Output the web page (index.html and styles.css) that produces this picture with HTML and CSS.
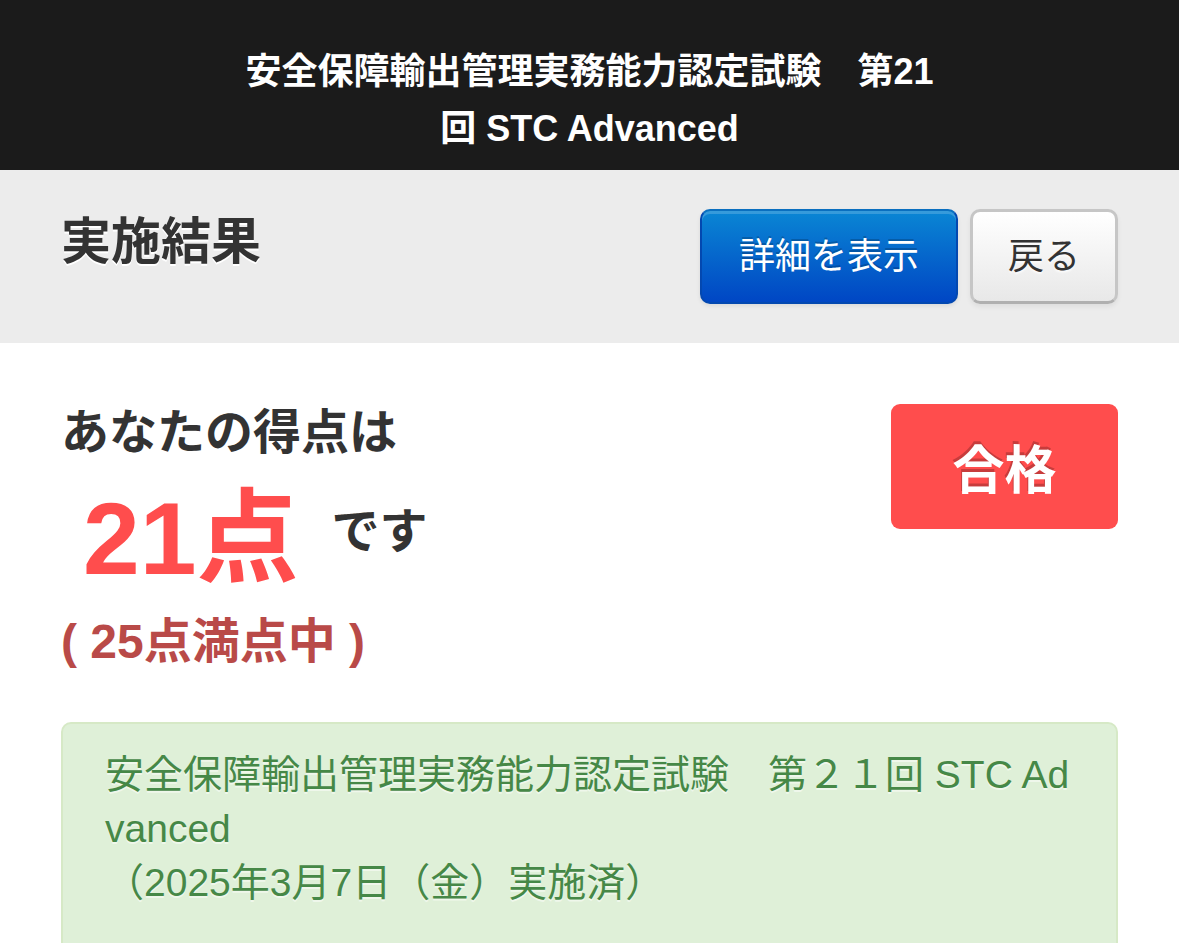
FILE: index.html
```html
<!DOCTYPE html>
<html lang="ja">
<head>
<meta charset="utf-8">
<title>実施結果</title>
<link rel="stylesheet" href="styles.css">
</head>
<body>
<header class="site-header">
  <h1 class="site-title">安全保障輸出管理実務能力認定試験　第21回 STC Advanced</h1>
</header>
<section class="toolbar">
  <h2 class="page-title">実施結果</h2>
  <div class="toolbar-actions">
    <button class="btn btn-primary" type="button">詳細を表示</button>
    <button class="btn btn-default" type="button">戻る</button>
  </div>
</section>
<main class="content">
  <div class="result-row">
    <div class="score-block">
      <p class="score-label">あなたの得点は</p>
      <div class="score-line">
        <span class="score-value">21点</span>
        <span class="score-suffix">です</span>
      </div>
      <p class="score-max">( 25点満点中 )</p>
    </div>
    <div class="pass-badge">合格</div>
  </div>
  <div class="alert-success">安全保障輸出管理実務能力認定試験　第２１回 STC Advanced<br>（2025年3月7日（金）実施済）</div>
</main>
</body>
</html>
```

FILE: styles.css
```css
* { box-sizing: border-box; }

html, body {
  margin: 0;
  padding: 0;
  background: #ffffff;
  font-family: "Liberation Sans", "Noto Sans CJK JP", sans-serif;
  color: #333333;
}

.site-header {
  background: #1b1b1b;
  height: 170px;
  padding: 43px 0 13px;
}

.site-title {
  width: 710px;
  margin: 0 auto;
  font-size: 36px;
  line-height: 57px;
  font-weight: bold;
  color: #ffffff;
  text-align: center;
}

.toolbar {
  background: #ececec;
  height: 173px;
  padding: 39px 61px 0 61px;
  display: flex;
  justify-content: space-between;
  align-items: flex-start;
}

.page-title {
  margin: 3px 0 0;
  font-size: 50px;
  line-height: 60px;
  font-weight: bold;
  color: #333333;
  text-shadow: 0 2px 0 #ffffff;
}

.toolbar-actions {
  display: flex;
  gap: 12px;
}

.btn {
  height: 95px;
  font-family: "Liberation Sans", "Noto Sans CJK JP", sans-serif;
  font-size: 36px;
  line-height: 1;
  border-radius: 10px;
  padding: 0;
  cursor: pointer;
}

.btn-primary {
  width: 258px;
  color: #ffffff;
  background: linear-gradient(to bottom, #0a86d4 0%, #0046c4 100%);
  border: 2px solid #0348b0;
  border-top-color: #0a6fbf;
  box-shadow: inset 0 3px 0 rgba(255, 255, 255, 0.18), 0 2px 4px rgba(0, 0, 0, 0.08);
  text-shadow: 0 -2px 0 rgba(0, 0, 0, 0.2);
}

.btn-default {
  width: 148px;
  color: #333333;
  background: linear-gradient(to bottom, #ffffff 0%, #e8e8e8 100%);
  border: 3px solid #c6c6c6;
  border-bottom-color: #b0b0b0;
  box-shadow: 0 3px 5px rgba(0, 0, 0, 0.06);
  text-shadow: 0 2px 2px rgba(255, 255, 255, 0.75);
}

.content {
  padding: 61px 61px 0 61px;
}

.result-row {
  display: flex;
  justify-content: space-between;
  align-items: flex-start;
}

.score-label {
  margin: 0;
  font-size: 48px;
  line-height: 58px;
  font-weight: bold;
  color: #333333;
}

.score-line {
  display: flex;
  align-items: flex-start;
  margin-top: 26px;
}

.score-value {
  margin-left: 22px;
  font-size: 102px;
  line-height: 102px;
  font-weight: bold;
  color: #ff4d4d;
}

.score-suffix {
  margin-left: 33px;
  margin-top: 20px;
  font-size: 48px;
  line-height: 48px;
  font-weight: bold;
  color: #333333;
}

.score-max {
  margin: 23px 0 0;
  font-size: 48px;
  line-height: 58px;
  font-weight: bold;
  color: #b94a48;
}

.pass-badge {
  width: 227px;
  height: 125px;
  background: #ff4d4d;
  border-radius: 9px;
  display: flex;
  align-items: center;
  justify-content: center;
  font-size: 52px;
  font-weight: bold;
  color: #ffffff;
  text-shadow: -1px -3px 0 rgba(0, 0, 0, 0.22);
}

.alert-success {
  margin-top: 51px;
  padding: 24px 40px 80px 42px;
  background: #dff0d8;
  border: 2px solid #d6e9c6;
  border-radius: 10px;
  color: #468847;
  font-size: 39px;
  line-height: 54px;
  word-break: break-all;
  text-shadow: 0 2px 0 rgba(255, 255, 255, 0.5);
}
```
